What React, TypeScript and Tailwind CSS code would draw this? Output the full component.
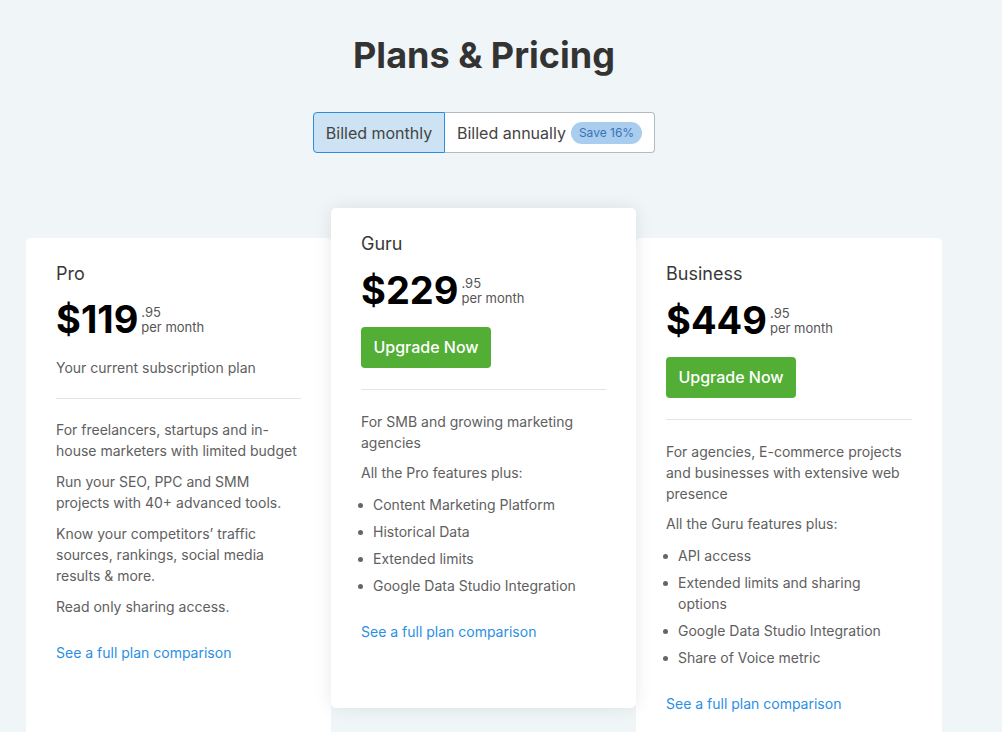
import React from "react";

const font = { fontFamily: "Inter, 'Noto Sans', sans-serif" };

function Price({ value }: { value: string }) {
  return (
    <div className="flex items-start">
      <span className="text-[38px] leading-[38px] font-bold text-black">{value}</span>
      <div className="ml-[3px] mt-[5px] flex flex-col text-[13px] leading-[15px] text-[#555]">
        <span>.95</span>
        <span>per month</span>
      </div>
    </div>
  );
}

function Bullets({ items }: { items: string[] }) {
  return (
    <ul className="mt-[2px] flex flex-col gap-[6px]">
      {items.map((t) => (
        <li key={t} className="flex items-start">
          <span className="ml-[-3px] mr-[10px] mt-[9px] h-[5px] w-[5px] shrink-0 rounded-full bg-[#666]" />
          <span>{t}</span>
        </li>
      ))}
    </ul>
  );
}

function Link() {
  return (
    <div className="mt-[25px] text-[14px] leading-[21px] text-[#2b8fe3]">See a full plan comparison</div>
  );
}

function UpgradeButton() {
  return (
    <div className="mt-[18px] flex h-[41px] w-[130px] items-center justify-center rounded-[4px] bg-[#52ae34] text-[16px] font-medium text-white">
      Upgrade Now
    </div>
  );
}

export default function App() {
  return (
    <div style={font} className="h-[732px] w-[1002px] overflow-hidden bg-[#f0f5f8]">
      <div className="flex w-[968px] flex-col items-center">
        <h1 className="pt-[33px] text-[36px] leading-[44px] font-bold text-[#333]">Plans &amp; Pricing</h1>
        <div className="mt-[35px] flex h-[41px] text-[16px] text-[#444]">
          <div className="flex w-[132px] items-center justify-center rounded-l-[4px] border border-[#2a8de0] bg-[#cde3f3]">
            Billed monthly
          </div>
          <div className="flex w-[210px] items-center rounded-r-[4px] border border-l-0 border-[#b3bbc2] bg-white pl-[12px]">
            <span>Billed annually</span>
            <span className="ml-[5px] flex h-[22px] items-center rounded-full bg-[#a9cdee] px-[8px] text-[12px] text-[#3a72b8]">
              Save 16%
            </span>
          </div>
        </div>
      </div>

      <div className="mt-[55px] flex items-start pl-[26px] text-[14px] leading-[21px] text-[#606060]">
        {/* Pro */}
        <div className="mt-[30px] h-[600px] w-[305px] shrink-0 rounded-[5px] bg-white px-[30px] pt-[24px]">
          <div className="text-[18px] leading-[24px] text-[#383838]">Pro</div>
          <div className="mt-[14px]">
            <Price value="$119" />
          </div>
          <div className="mt-[19px]">Your current subscription plan</div>
          <div className="mt-[20px] h-px bg-[#e2e4e6]" />
          <div className="mt-[20px] flex flex-col gap-[10px]">
            <p>For freelancers, startups and in-house marketers with limited budget</p>
            <p>Run your SEO, PPC and SMM projects with 40+ advanced tools.</p>
            <p>Know your competitors’ traffic sources, rankings, social media results &amp; more.</p>
            <p>Read only sharing access.</p>
          </div>
          <Link />
        </div>

        {/* Guru */}
        <div className="relative z-10 h-[500px] w-[305px] shrink-0 rounded-[5px] bg-white px-[30px] pt-[24px] shadow-[0_0_18px_rgba(0,0,0,0.09)]">
          <div className="text-[18px] leading-[24px] text-[#383838]">Guru</div>
          <div className="mt-[15px]">
            <Price value="$229" />
          </div>
          <UpgradeButton />
          <div className="mt-[21px] h-px bg-[#e2e4e6]" />
          <div className="mt-[21px] flex flex-col gap-[9px]">
            <p>For SMB and growing marketing agencies</p>
            <p>All the Pro features plus:</p>
            <Bullets
              items={["Content Marketing Platform", "Historical Data", "Extended limits", "Google Data Studio Integration"]}
            />
          </div>
          <Link />
        </div>

        {/* Business */}
        <div className="mt-[30px] h-[600px] w-[306px] shrink-0 rounded-[5px] bg-white px-[30px] pt-[24px]">
          <div className="text-[18px] leading-[24px] text-[#383838]">Business</div>
          <div className="mt-[15px]">
            <Price value="$449" />
          </div>
          <UpgradeButton />
          <div className="mt-[21px] h-px bg-[#e2e4e6]" />
          <div className="mt-[21px] flex flex-col gap-[9px]">
            <p>For agencies, E-commerce projects and businesses with extensive web presence</p>
            <p>All the Guru features plus:</p>
            <Bullets
              items={["API access", "Extended limits and sharing options", "Google Data Studio Integration", "Share of Voice metric"]}
            />
          </div>
          <Link />
        </div>
      </div>
    </div>
  );
}
